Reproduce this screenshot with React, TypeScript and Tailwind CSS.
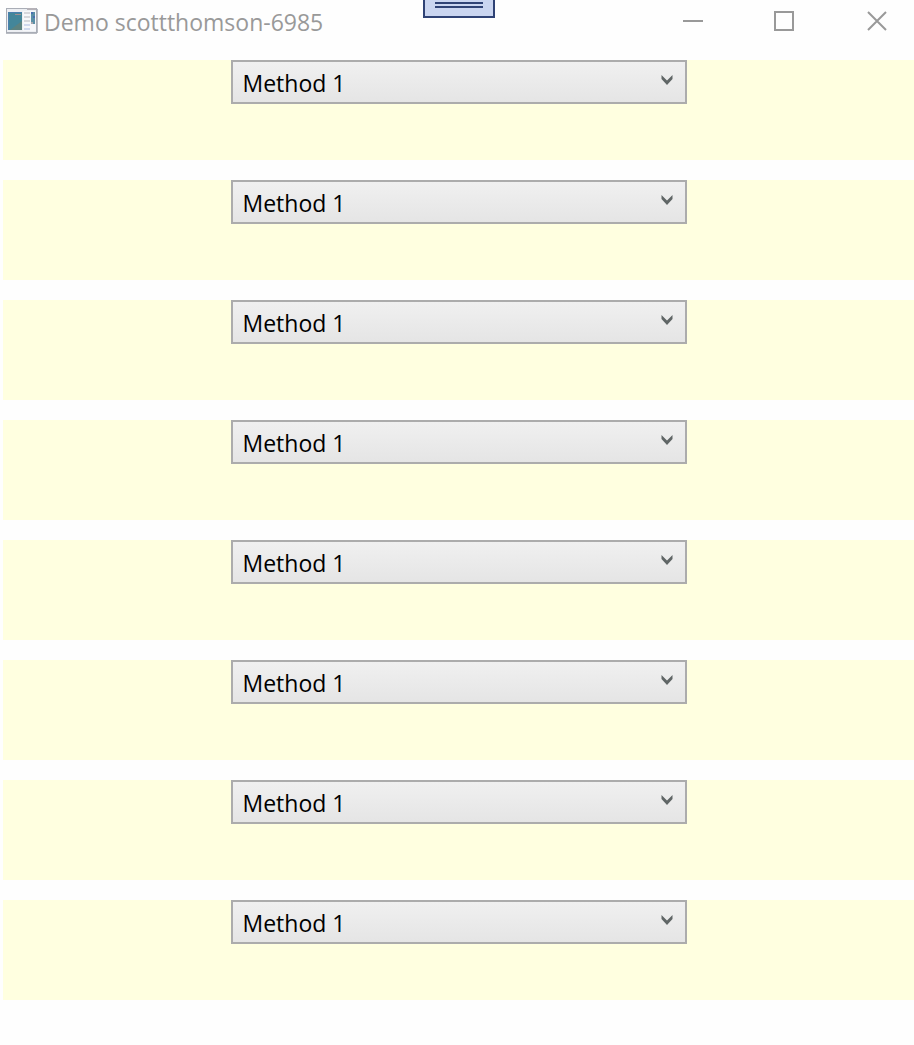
import type { ReactNode } from "react";

const METHODS = ["Method 1", "Method 2", "Method 3"];
const ROWS = [1, 2, 3, 4, 5, 6, 7, 8];

function AppIcon() {
  return (
    <svg width="32" height="26" viewBox="0 0 32 26" className="shrink-0" aria-hidden="true">
      <rect x="0.5" y="0.5" width="30" height="24" fill="#eceef2" stroke="#a9adb6" />
      <path d="M0 25.5h31M31.5 1v24" stroke="#b9bcc3" />
      <path d="M21 1h9" stroke="#b5b2b8" strokeWidth="2" />
      <rect x="2" y="4" width="14" height="18" fill="#43869a" />
      <path d="M16 13V22H4Z" fill="#5c8280" />
      <path d="M2.5 22V4.5H16" fill="none" stroke="#4a7fae" />
      <path d="M9 6.5h6" stroke="#a08f92" />
      <rect x="17" y="3" width="13" height="20" fill="#f6f7fa" />
      <path d="M18 5h6M18 9h6M18 13h6" stroke="#d6d7dc" strokeWidth="2" />
      <path d="M18 17h6M18 21h6" stroke="#d0d9ee" strokeWidth="2" />
      <rect x="25" y="4" width="4" height="12" fill="#5a8fa6" />
      <path d="M25 5h2M27 9h2" stroke="#4a6fb0" strokeWidth="2" />
      <path d="M25 15h2" stroke="#a9a7ae" strokeWidth="2" />
    </svg>
  );
}

function CaptionButton({ label, children }: { label: string; children: ReactNode }) {
  return (
    <button type="button" aria-label={label} className="flex h-full w-[92px] items-center justify-center">
      <svg
        width="22"
        height="22"
        viewBox="0 0 22 22"
        fill="none"
        stroke="#999999"
        strokeWidth="2"
        aria-hidden="true"
      >
        {children}
      </svg>
    </button>
  );
}

function TitleBar() {
  return (
    <header className="relative flex h-[42px] items-center pl-[6px]">
      <AppIcon />
      <h1 className="ml-[6px] mt-px text-[23px] leading-8 text-[#999999]">Demo scottthomson-6985</h1>

      {/* debug toolbar grip, hangs from the top edge */}
      <div className="absolute left-1/2 top-0 flex h-[18px] w-[72px] -translate-x-[34px] flex-col items-center gap-[2px] border-2 border-t-0 border-[#2f4275] bg-[#cad5f0] pt-[2px]">
        <span className="h-[2px] w-12 bg-[#2f4275]" />
        <span className="h-[2px] w-12 bg-[#2f4275]" />
      </div>

      <div className="-mr-[9px] ml-auto flex h-full">
        <CaptionButton label="Minimize">
          <path d="M1 11h20" />
        </CaptionButton>
        <CaptionButton label="Maximize">
          <rect x="1" y="2" width="18" height="18" />
        </CaptionButton>
        <CaptionButton label="Close">
          <path d="M2 2l18 18M20 2L2 20" />
        </CaptionButton>
      </div>
    </header>
  );
}

function MethodRow({ index }: { index: number }) {
  return (
    <li className="h-[100px] bg-[#ffffe0]">
      <div className="relative mx-auto w-[456px] max-w-full">
        <select
          aria-label={`Method for row ${index}`}
          className="block h-11 w-full appearance-none border-2 border-[#acacac] bg-linear-to-b from-[#f0f0f0] to-[#e5e5e5] pl-[10px] pt-[2px] text-[23px] text-black"
        >
          {METHODS.map((method) => (
            <option key={method}>{method}</option>
          ))}
        </select>
        <svg
          width="12"
          height="10"
          viewBox="0 0 12 10"
          className="pointer-events-none absolute right-[14px] top-[15px]"
          aria-hidden="true"
        >
          <path d="M0.5 0L6 5.5L11.5 0V4L6 10L0.5 4Z" fill="#606666" />
        </svg>
      </div>
    </li>
  );
}

export default function App() {
  return (
    <div className="min-h-screen bg-[#fefefe] font-['Open_Sans','Noto_Sans',sans-serif]">
      <TitleBar />
      <main className="pl-[3px] pt-[18px]">
        <ul className="flex flex-col gap-5">
          {ROWS.map((row) => (
            <MethodRow key={row} index={row} />
          ))}
        </ul>
      </main>
    </div>
  );
}
